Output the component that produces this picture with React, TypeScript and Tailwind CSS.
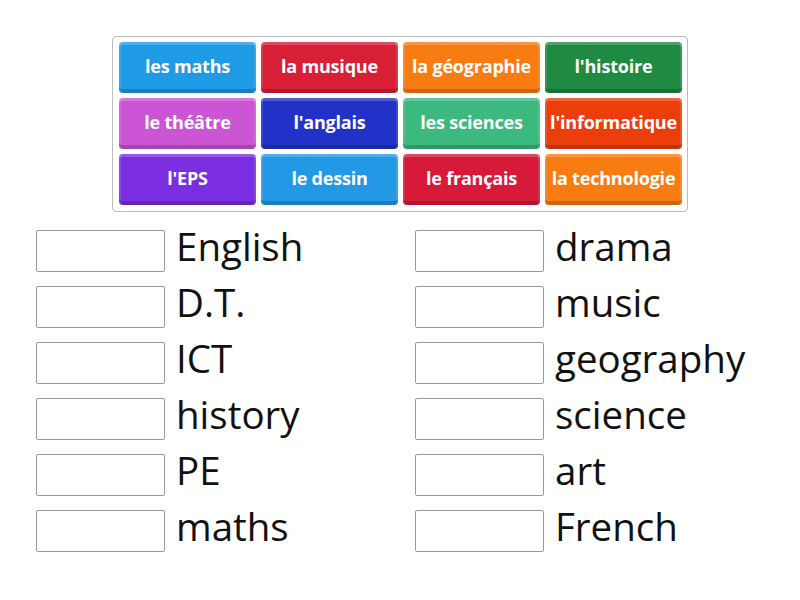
const TILES = [
  { label: 'les maths', bg: 'bg-[#1f9be6]' },
  { label: 'la musique', bg: 'bg-[#d81f36]' },
  { label: 'la géographie', bg: 'bg-[#f97c12]' },
  { label: "l'histoire", bg: 'bg-[#1e8a42]' },
  { label: 'le théâtre', bg: 'bg-[#cb55d5]' },
  { label: "l'anglais", bg: 'bg-[#2232c8]' },
  { label: 'les sciences', bg: 'bg-[#3bb97f]' },
  { label: "l'informatique", bg: 'bg-[#eb3e0b]' },
  { label: "l'EPS", bg: 'bg-[#7a2ee0]' },
  { label: 'le dessin', bg: 'bg-[#2399e6]' },
  { label: 'le français', bg: 'bg-[#d81a3a]' },
  { label: 'la technologie', bg: 'bg-[#f97c12]' },
];

const LEFT = ['English', 'D.T.', 'ICT', 'history', 'PE', 'maths'];
const RIGHT = ['drama', 'music', 'geography', 'science', 'art', 'French'];

function Column({ items }: { items: string[] }) {
  return (
    <div className="flex flex-col gap-[14px]">
      {items.map((t) => (
        <div key={t} className="flex items-center h-[42px] gap-[11px]">
          <div className="w-[129px] h-[42px] border border-[#9a9a9a] rounded-[2px] bg-white shrink-0" />
          <span className="text-[38.5px] leading-none text-[#111] -mt-[9px] whitespace-nowrap">{t}</span>
        </div>
      ))}
    </div>
  );
}

export default function App() {
  return (
    <div className="w-[800px] h-[600px] bg-white font-['Open_Sans',sans-serif] relative">
      <div className="pt-[36px] pl-[112px]">
        <div className="w-[576px] border border-[#bdbdbd] rounded-[4px] pt-[5px] pl-[6px] pb-[6px] pr-[5px]">
          <div className="grid grid-cols-[repeat(4,137px)] gap-[5px]">
            {TILES.map((t) => (
              <div
                key={t.label}
                className={`${t.bg} h-[51px] rounded-[4px] flex items-center justify-center text-white font-bold text-[18px] tracking-[-0.2px] whitespace-nowrap shadow-[inset_0_3px_0_rgba(255,255,255,0.2),inset_0_-4px_0_rgba(0,0,0,0.18),inset_2px_0_0_rgba(255,255,255,0.12),inset_-2px_0_0_rgba(255,255,255,0.12)]`}
              >
                <span className="-mt-[2px]">{t.label}</span>
              </div>
            ))}
          </div>
        </div>
      </div>
      <div className="flex pt-[18px] pl-[36px] gap-[250px]">
        <div className="w-[129px]">
          <Column items={LEFT} />
        </div>
        <Column items={RIGHT} />
      </div>
    </div>
  );
}
